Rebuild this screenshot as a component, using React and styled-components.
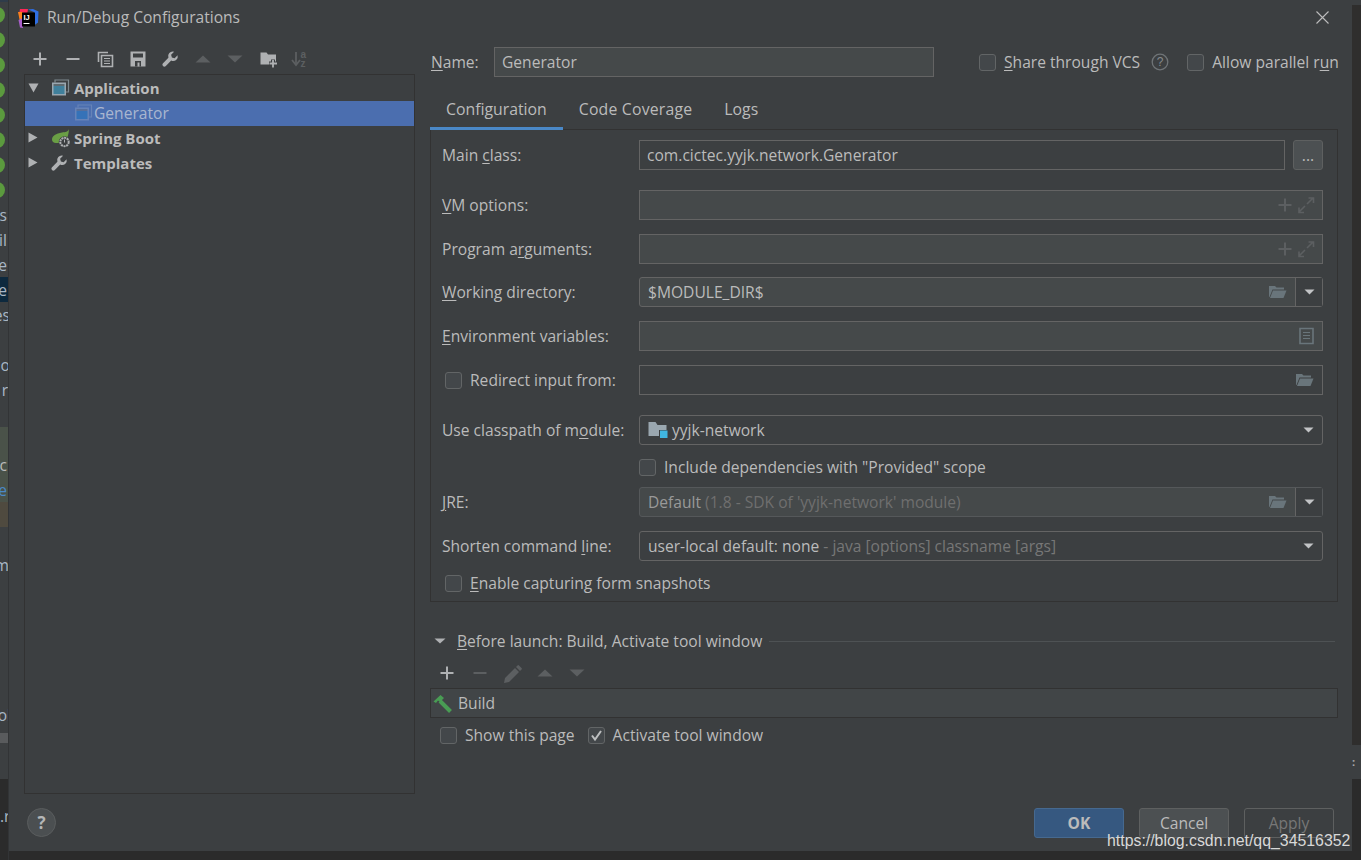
import styled, { createGlobalStyle } from "styled-components";

const GlobalStyle = createGlobalStyle`
  html, body {
    margin: 0;
    padding: 0;
    background: #2b2b2b;
    overflow: hidden;
  }
`;

const ICON = "#afb1b3";
const DIM = "#5c5f61";
const FOLDER = "#69757b";

const Root = styled.div`
  width: 1361px;
  height: 860px;
  display: flex;
  position: relative;
  overflow: hidden;
  background: #2b2b2b;
  font-family: "Open Sans", "Noto Sans", sans-serif;
  font-size: 15.6px;
  color: #bbbbbb;
`;

/* ---- the IDE showing behind the dialog ---- */
const LeftStrip = styled.div`
  width: 9px;
  flex: none;
  box-sizing: border-box;
  border-right: 1px solid #323436;
  display: flex;
  flex-direction: column;
  background: #3c3f41;
  overflow: hidden;
`;
const TopEdge = styled.div`
  height: 2px;
  flex: none;
  background: #2f3c4a;
`;
const TreeRow = styled.div`
  height: 25px;
  flex: none;
  display: flex;
  align-items: center;
  justify-content: flex-end;
  background: ${(p) => p.$bg || "transparent"};
  color: ${(p) => p.$color || "#a9b7c6"};
  white-space: nowrap;
  padding-right: ${(p) => p.$pad ?? 1}px;
  margin-right: ${(p) => p.$over || 0}px;
`;
const GreenDot = styled.div`
  width: 16px;
  height: 16px;
  flex: none;
  margin-right: 3px;
  border-radius: 50%;
  background: #5b9a3e;
`;
const ScrollPiece = styled.div`
  height: 10px;
  flex: none;
  margin-top: 6px;
  background: #595b5d;
`;
const StripGap = styled.div`
  height: 36px;
  flex: none;
`;
const StripDark = styled.div`
  flex: 1;
  background: #2b2b2b;
  padding-top: 26px;
  color: #a9b7c6;
  text-align: right;
  line-height: 22px;
  white-space: nowrap;
`;
const RightStrip = styled.div`
  width: 9px;
  flex: none;
  display: flex;
  flex-direction: column;
`;
const RightCap = styled.div`
  height: 5px;
  background: #3c3f41;
`;
const RightTop = styled.div`
  height: 740px;
  background: #2f2e2d;
`;
const RightMid = styled.div`
  height: 34px;
  background: #3c3f41;
  color: #a9a9a9;
  font-size: 11px;
  font-weight: 700;
  line-height: 34px;
`;
const RightBottom = styled.div`
  flex: 1;
  background: #2b2b2b;
`;

/* ---- dialog ---- */
const DialogColumn = styled.div`
  flex: 1;
  display: flex;
  flex-direction: column;
  min-width: 0;
`;
const Dialog = styled.div`
  height: 851px;
  flex: none;
  display: flex;
  flex-direction: column;
  background: #3c3f41;
`;
const TitleBar = styled.div`
  height: 35px;
  flex: none;
  display: flex;
  align-items: center;
  padding: 0 23px 0 10px;
  gap: 10px;
`;
const Title = styled.div`
  flex: 1;
  padding-bottom: 2px;
`;
const Body = styled.div`
  height: 759px;
  flex: none;
  display: flex;
  gap: 15px;
  padding-left: 15px;
`;
const LeftPane = styled.div`
  width: 391px;
  flex: none;
  display: flex;
  flex-direction: column;
  padding-top: 9px;
  box-sizing: border-box;
`;
const IconBar = styled.div`
  height: 30px;
  flex: none;
  display: flex;
  align-items: center;
  gap: 16.5px;
  padding-left: ${(p) => p.$left}px;
  margin-top: ${(p) => p.$top || 0}px;
`;
const Tree = styled.div`
  flex: 1;
  border: 1px solid #323232;
  padding-top: 1px;
`;
const Node = styled.div`
  height: 25px;
  box-sizing: border-box;
  display: flex;
  align-items: center;
  padding-left: ${(p) => (p.$child ? 49 : 3)}px;
  padding-bottom: 2px;
  background: ${(p) => (p.$selected ? "#4b6eaf" : "transparent")};
  color: ${(p) => (p.$selected ? "#a9b6cf" : "#bbbbbb")};
  font-weight: ${(p) => (p.$child ? 400 : 700)};
  font-size: ${(p) => (p.$child ? 15.6 : 15)}px;
`;
const CaretSlot = styled.div`
  width: 23px;
  flex: none;
  display: flex;
`;
const NodeIcon = styled.div`
  width: ${(p) => (p.$child ? 20 : 23)}px;
  flex: none;
  display: flex;
`;

const RightPane = styled.div`
  width: 908px;
  flex: none;
  display: flex;
  flex-direction: column;
`;
const NameRow = styled.div`
  height: 30px;
  flex: none;
  margin-top: 12px;
  display: flex;
  align-items: center;
  padding-left: 1px;
`;
const NameLabel = styled.div`
  width: 63px;
  flex: none;
`;
const Mn = styled.span`
  text-decoration: underline;
  text-underline-offset: 2px;
`;
const Field = styled.div`
  height: 30px;
  box-sizing: border-box;
  flex: ${(p) => (p.$width ? "none" : 1)};
  width: ${(p) => (p.$width ? `${p.$width}px` : "auto")};
  min-width: 0;
  display: flex;
  align-items: center;
  padding: 0 8px 0 ${(p) => (p.$round ? 8 : 7)}px;
  gap: 5px;
  border: 1px solid ${(p) => (p.$disabled ? "#55585a" : "#646464")};
  border-radius: ${(p) => (p.$round ? 3 : 0)}px;
  background: ${(p) => (p.$fill ? "#45494a" : "transparent")};
  white-space: nowrap;
`;
const FieldText = styled.div`
  flex: 1;
  min-width: 0;
  display: flex;
  align-items: center;
  gap: 4px;
  color: ${(p) => (p.$muted ? "#999999" : "inherit")};
`;
const Grey = styled.span`
  color: ${(p) => (p.$darker ? "#6f6f6f" : "#777777")};
`;
const ComboEnd = styled.div`
  width: 27px;
  height: 100%;
  flex: none;
  margin-right: -8px;
  margin-left: 3px;
  display: flex;
  align-items: center;
  justify-content: center;
  box-sizing: border-box;
  border-left: ${(p) => (p.$split ? "1px solid #646464" : "none")};
  background: ${(p) => (p.$split ? "#3c3f41" : "transparent")};
`;
const Box = styled.div`
  width: 17px;
  height: 17px;
  flex: none;
  box-sizing: border-box;
  border: 1px solid #626566;
  border-radius: 3px;
  background: #43474a;
  display: flex;
  align-items: center;
  justify-content: center;
`;
const Check = styled.label`
  display: flex;
  align-items: center;
  gap: 8px;
  white-space: nowrap;
  flex: none;
  margin-left: ${(p) => p.$left || 0}px;
`;
const HelpRing = styled.div`
  flex: none;
  display: flex;
  margin-left: ${(p) => p.$left}px;
`;
const TabBar = styled.div`
  height: 53px;
  flex: none;
  box-sizing: border-box;
  display: flex;
  align-items: flex-end;
  border-bottom: 1px solid #323232;
`;
const Tab = styled.div`
  height: 38px;
  box-sizing: border-box;
  display: flex;
  align-items: center;
  padding: 0 16px 2px;
  font-size: 15.8px;
  letter-spacing: ${(p) => p.$track || 0}px;
  border-bottom: 3px solid ${(p) => (p.$active ? "#4a88c7" : "transparent")};
  margin-bottom: -1px;
`;
const Panel = styled.div`
  height: 472px;
  flex: none;
  box-sizing: border-box;
  border: 1px solid #323232;
  border-top: none;
  padding: 10px 14px 0 11px;
`;
const Row = styled.div`
  height: ${(p) => p.$height || 30}px;
  margin-top: ${(p) => p.$top || 0}px;
  display: flex;
  align-items: center;
  gap: ${(p) => p.$gap || 0}px;
  padding-left: ${(p) => p.$indent || 0}px;
`;
const Label = styled.div`
  width: 197px;
  flex: none;
  white-space: nowrap;
`;
const CheckLabel = styled(Check)`
  width: 197px;
  padding-left: 3px;
  box-sizing: border-box;
`;
const DotsButton = styled.div`
  width: 30px;
  height: 30px;
  flex: none;
  margin-left: 8px;
  box-sizing: border-box;
  border: 1px solid #5e6060;
  border-radius: 3px;
  background: #4c5052;
  text-align: center;
  line-height: 28px;
`;
const SectionHead = styled.div`
  height: 20px;
  flex: none;
  margin-top: 29px;
  display: flex;
  align-items: center;
  padding: 0 3px 0 4px;
`;
const SectionText = styled.div`
  margin-left: 11px;
  white-space: nowrap;
  padding-bottom: 1px;
`;
const SectionLine = styled.div`
  flex: 1;
  height: 1px;
  margin-left: 7px;
  background: #4e5254;
`;
const BuildList = styled.div`
  height: 30px;
  flex: none;
  box-sizing: border-box;
  display: flex;
  align-items: center;
  gap: 6px;
  padding-left: 2px;
  border: 1px solid #323232;
  background: #414547;
`;
const Footer = styled.div`
  flex: 1;
  display: flex;
  align-items: flex-start;
  padding: 14px 18px 0 18px;
  gap: 15px;
`;
const HelpButton = styled.div`
  width: 29px;
  height: 29px;
  box-sizing: border-box;
  margin-right: auto;
  border: 1px solid #5a5d5e;
  border-radius: 50%;
  background: #4b4f51;
  color: #b4b6b7;
  font-weight: 700;
  font-size: 17px;
  line-height: 27px;
  text-align: center;
`;
const Btn = styled.div`
  width: 90px;
  height: 30px;
  box-sizing: border-box;
  border: 1px solid ${(p) => (p.$primary ? "#46698f" : "#5e6060")};
  border-radius: 3px;
  background: ${(p) => (p.$primary ? "#365880" : p.$off ? "transparent" : "#4c5052")};
  color: ${(p) => (p.$off ? "#777777" : "#bbbbbb")};
  font-weight: ${(p) => (p.$primary ? 700 : 400)};
  line-height: 28px;
  text-align: center;
`;
const BottomStrip = styled.div`
  flex: 1;
  background: #2b2b2b;
`;
const Watermark = styled.div`
  position: absolute;
  left: 1107px;
  top: 832px;
  font-family: "Liberation Sans", Arial, sans-serif;
  font-size: 15.87px;
  line-height: 18px;
  color: #d8d8d8;
  white-space: nowrap;
`;

/* ---- icons ---- */
const Svg = ({ size = 16, w, h, children }) => (
  <svg
    width={w || size}
    height={h || size}
    viewBox={`0 0 ${w || size} ${h || size}`}
    overflow="visible"
    style={{ display: "block", flex: "none" }}
  >
    {children}
  </svg>
);

const Plus = ({ color = ICON }) => (
  <Svg><path d="M8 1.5v13M1.5 8h13" stroke={color} strokeWidth="2" /></Svg>
);
const Minus = ({ color = ICON }) => (
  <Svg><path d="M1.5 8h13" stroke={color} strokeWidth="2" /></Svg>
);
const Copy = () => (
  <Svg>
    <path d="M1.500 11V1.500H11" fill="none" stroke={ICON} strokeWidth="1.600" />
    <path d="M4.500 4.500h11v11h-11z" fill="#3c3f41" stroke={ICON} strokeWidth="1.600" />
    <path d="M7 7.500h6M7 10h6M7 12.500h6" stroke={ICON} strokeWidth="1.200" />
  </Svg>
);
const Save = () => (
  <Svg>
    <path d="M0.500 0.500h15v15h-15z" fill={ICON} />
    <path d="M3 2.500h10v4H3z" fill="#3c3f41" />
    <path d="M5 10h6v5.500H5z" fill="#3c3f41" />
    <path d="M7.500 11.500h2v4h-2z" fill={ICON} />
  </Svg>
);
const Wrench = ({ color = ICON }) => (
  <Svg>
    <path d="M15.600 4.200l-3 3-2.700-.8-.8-2.700 3-3A4.600 4.600 0 0 0 6.400 6.800L.8 12.400a2 2 0 0 0 2.800 2.800L9.200 9.600a4.600 4.600 0 0 0 6.400-5.400z" fill={color} />
  </Svg>
);
const Pencil = () => (
  <Svg>
    <path d="M0 18l1-5L11 3l4 4L5 17zM12 2l1.500-1.500a1 1 0 0 1 1.500 0l2.500 2.500a1 1 0 0 1 0 1.500L16 6z" fill={DIM} />
  </Svg>
);
const Tri = ({ up, color = DIM, w = 16, h = 8 }) => (
  <Svg w={w} h={h}>
    <path d={up ? `M0.500 ${h - 0.5}L${w / 2} 0.500 ${w - 0.5} ${h - 0.5}z` : `M0.500 0.500H${w - 0.5}L${w / 2} ${h - 0.5}z`} fill={color} />
  </Svg>
);
const Caret = () => (
  <Svg w={10} h={11}>
    <path d="M0.500 0.500L9.500 5.500 0.500 10.500z" fill={ICON} />
  </Svg>
);
const FolderPlus = () => (
  <Svg>
    <path d="M0.500 1.500h6l1.500 2h8v10h-15.500z" fill={ICON} />
    <path d="M13 8.500v8M9 12.500h8" stroke="#3c3f41" strokeWidth="4" />
    <path d="M13 9v7.500M9.500 12.500h7.500" stroke={ICON} strokeWidth="1.800" />
  </Svg>
);
const Sort = () => (
  <Svg>
    <path d="M4 1v12" stroke={DIM} strokeWidth="1.800" />
    <path d="M0 9l4 5 4-5" fill="none" stroke={DIM} strokeWidth="1.800" />
    <text x="8.500" y="6.500" fontSize="10" fontWeight="700" fill={DIM} fontFamily="Liberation Sans">a</text>
    <text x="8.500" y="15.500" fontSize="10" fontWeight="700" fill={DIM} fontFamily="Liberation Sans">z</text>
  </Svg>
);
const Close = () => (
  <Svg w={13} h={13}>
    <path d="M0.500 0.500l12 12M12.500 0.500l-12 12" stroke="#bdbdbd" strokeWidth="1.100" />
  </Svg>
);
const Logo = () => (
  <Svg w={18} h={20}>
    <path d="M1 1h8l-1 6H0z" fill="#fe2857" />
    <path d="M-1 4h5v9l-3 1z" fill="#fc801d" />
    <path d="M-.5 12L4 10v10l-3-.5z" fill="#a85fc8" />
    <path d="M9 1.500l5-.5 5.500 2.500-.5 11-4 3V4z" fill="#2f6fe4" />
    <path d="M3 4.500h13v14H3z" fill="#000000" />
    <text x="4.500" y="11.500" fontSize="7.500" fontWeight="700" fill="#ffffff" fontFamily="Liberation Sans">IJ</text>
    <path d="M4.500 15h6v1h-6z" fill="#ffffff" />
  </Svg>
);
const AppIcon = ({ dim }) => (
  <Svg w={18} h={18}>
    <path d="M4 3.500V1h13.500v12H15" fill="none" stroke={dim ? "#6683b8" : "#7f8a90"} strokeWidth="1.200" />
    <path d="M1 3.500h14v13H1z" fill={dim ? "#6683b8" : "#9aa7b0"} />
    <path d="M2.500 7h11v8h-11z" fill={dim ? "#3572b8" : "#40809c"} />
    <path d="M2.500 5h11v2h-11z" fill={dim ? "#566f9c" : "#5e6a70"} />
  </Svg>
);
const SpringIcon = () => (
  <Svg w={20} h={20}>
    <path d="M18 1c-1 3-3.500 3-7 3.500C5 5.500 1 8 1 11.500c0 2 1.500 3.500 4 3.500h5c4 0 7.500-5 8-14z" fill="#6a9f45" />
    <circle cx="13.500" cy="14" r="5.800" fill="#3c3f41" />
    <circle cx="13.500" cy="14" r="4.200" fill="none" stroke={ICON} strokeWidth="2" strokeDasharray="2 0.700" />
    <path d="M13.500 11.500v3" stroke={ICON} strokeWidth="1" />
  </Svg>
);
const Hammer = () => (
  <Svg w={19} h={19}>
    <path d="M7 7l10.500 10.500" stroke="#499c54" strokeWidth="4" />
    <path d="M0.500 7.500L7.500 1l3.500 3-4 4-2-1.500-2 2.500z" fill="#499c54" />
  </Svg>
);
const FolderOpen = ({ color = FOLDER }) => (
  <Svg w={19} h={16}>
    <path d="M1 2h6l1.500 1.500H16v2H4.500L1.500 13H1z" fill={color} />
    <path d="M5 6.500h13.500l-3 7.500H2z" fill={color} />
  </Svg>
);
const Expand = () => (
  <Svg>
    <path d="M9 7l5.500-5.500M10.500 1h5v5M7 9l-5.500 5.500M1 10.500v5h5" fill="none" stroke={DIM} strokeWidth="1.600" />
  </Svg>
);
const DocIcon = () => (
  <Svg w={15} h={18}>
    <path d="M1 1.500h13v15H1z" fill="none" stroke={FOLDER} strokeWidth="1.600" />
    <path d="M4 5.500h7M4 8.500h7M4 11.500h7" stroke={FOLDER} strokeWidth="1.200" />
  </Svg>
);
const ModuleFolder = () => (
  <Svg w={20} h={18}>
    <path d="M0.500 1h7l2 3h9v11h-18z" fill="#9aa7b0" />
    <path d="M11 9h8v8.500h-8z" fill="#3c3f41" />
    <path d="M12 9.500h7.500v7.500H12z" fill="#40b6e0" />
  </Svg>
);
const Help = () => (
  <Svg w={18} h={18}>
    <circle cx="9" cy="9" r="7.800" fill="none" stroke="#6f7477" strokeWidth="1.300" />
    <text x="9" y="13.300" textAnchor="middle" fontSize="12" fill="#858a8d" fontFamily="Liberation Sans">?</text>
  </Svg>
);
const Tick = () => (
  <Svg w={13} h={13}>
    <path d="M2 6.500L5 10.500 11 2" fill="none" stroke="#bdbfc0" strokeWidth="2" />
  </Svg>
);
const Drop = () => <Tri w={11} h={6} color="#c2c4c6" />;

const ARGS = (
  <>
    <Plus color={DIM} />
    <Expand />
  </>
);

export default function App() {
  const greenRows = [0, 1, 2, 3, 4, 5, 6, 7];
  return (
    <Root>
      <GlobalStyle />
      <LeftStrip>
        <TopEdge />
        {greenRows.map((n) => (
          <TreeRow key={n} $pad={0}><GreenDot /></TreeRow>
        ))}
        <TreeRow>s</TreeRow>
        <TreeRow>til</TreeRow>
        <TreeRow>e</TreeRow>
        <TreeRow $bg="#0d293e">e</TreeRow>
        <TreeRow $over={-3}>es</TreeRow>
        <TreeRow />
        <TreeRow $over={-3}>o</TreeRow>
        <TreeRow $pad={0}>r</TreeRow>
        <TreeRow />
        <TreeRow $bg="#4a5249" />
        <TreeRow $bg="#4a5249" $color="#bbbbbb">c</TreeRow>
        <TreeRow $bg="#4a5249" $color="#4a88c7">e</TreeRow>
        <TreeRow $bg="#4f4a3f" />
        <TreeRow />
        <TreeRow $over={-2}>m</TreeRow>
        <TreeRow />
        <TreeRow />
        <TreeRow />
        <TreeRow />
        <TreeRow />
        <TreeRow $over={-4}>ol</TreeRow>
        <ScrollPiece />
        <StripGap />
        <StripDark>.r</StripDark>
      </LeftStrip>

      <DialogColumn>
        <Dialog>
          <TitleBar>
            <Logo />
            <Title>Run/Debug Configurations</Title>
            <Close />
          </TitleBar>
          <Body>
            <LeftPane>
              <IconBar $left={8}>
                <Plus />
                <Minus />
                <Copy />
                <Save />
                <Wrench />
                <Tri up />
                <Tri />
                <FolderPlus />
                <Sort />
              </IconBar>
              <Tree>
                <Node>
                  <CaretSlot><Tri w={11} h={10} color={ICON} /></CaretSlot>
                  <NodeIcon><AppIcon /></NodeIcon>
                  Application
                </Node>
                <Node $child $selected>
                  <NodeIcon $child><AppIcon dim /></NodeIcon>
                  Generator
                </Node>
                <Node>
                  <CaretSlot><Caret /></CaretSlot>
                  <NodeIcon><SpringIcon /></NodeIcon>
                  Spring Boot
                </Node>
                <Node>
                  <CaretSlot><Caret /></CaretSlot>
                  <NodeIcon><Wrench /></NodeIcon>
                  Templates
                </Node>
              </Tree>
            </LeftPane>

            <RightPane>
              <NameRow>
                <NameLabel><Mn>N</Mn>ame:</NameLabel>
                <Field $width={440} $fill>Generator</Field>
                <Check $left={45}><Box /><span><Mn>S</Mn>hare through VCS</span></Check>
                <HelpRing $left={11}><Help /></HelpRing>
                <Check $left={18}><Box /><span>Allow parallel r<Mn>u</Mn>n</span></Check>
              </NameRow>
              <TabBar>
                <Tab $active>Configuration</Tab>
                <Tab $track={0.2}>Code Coverage</Tab>
                <Tab>Logs</Tab>
              </TabBar>
              <Panel>
                <Row>
                  <Label>Main <Mn>c</Mn>lass:</Label>
                  <Field>com.cictec.yyjk.network.Generator</Field>
                  <DotsButton>...</DotsButton>
                </Row>
                <Row $top={20}>
                  <Label><Mn>V</Mn>M options:</Label>
                  <Field $fill><FieldText />{ARGS}</Field>
                </Row>
                <Row $top={14}>
                  <Label>Program a<Mn>r</Mn>guments:</Label>
                  <Field $fill><FieldText />{ARGS}</Field>
                </Row>
                <Row $top={13}>
                  <Label><Mn>W</Mn>orking directory:</Label>
                  <Field $fill $round>
                    <FieldText>$MODULE_DIR$</FieldText>
                    <FolderOpen />
                    <ComboEnd $split><Drop /></ComboEnd>
                  </Field>
                </Row>
                <Row $top={14}>
                  <Label><Mn>E</Mn>nvironment variables:</Label>
                  <Field $fill><FieldText /><DocIcon /></Field>
                </Row>
                <Row $top={14}>
                  <CheckLabel><Box /><span>Redirect input from:</span></CheckLabel>
                  <Field><FieldText /><FolderOpen /></Field>
                </Row>
                <Row $top={20}>
                  <Label>Use classpath of m<Mn>o</Mn>dule:</Label>
                  <Field $round>
                    <FieldText><ModuleFolder />yyjk-network</FieldText>
                    <ComboEnd><Drop /></ComboEnd>
                  </Field>
                </Row>
                <Row $top={12} $height={20} $indent={197}>
                  <Check><Box /><span>Include dependencies with "Provided" scope</span></Check>
                </Row>
                <Row $top={10}>
                  <Label><Mn>J</Mn>RE:</Label>
                  <Field $fill $round $disabled>
                    <FieldText $muted><span>Default <Grey $darker>(1.8 - SDK of 'yyjk-network' module)</Grey></span></FieldText>
                    <FolderOpen />
                    <ComboEnd $split><Drop /></ComboEnd>
                  </Field>
                </Row>
                <Row $top={14}>
                  <Label>Shorten command <Mn>l</Mn>ine:</Label>
                  <Field $round>
                    <FieldText><span>user-local default: none <Grey>- java [options] classname [args]</Grey></span></FieldText>
                    <ComboEnd><Drop /></ComboEnd>
                  </Field>
                </Row>
                <Row $top={12} $height={20} $indent={3}>
                  <Check><Box /><span><Mn>E</Mn>nable capturing form snapshots</span></Check>
                </Row>
              </Panel>
              <SectionHead>
                <Tri w={12} h={6} color={ICON} />
                <SectionText><Mn>B</Mn>efore launch: Build, Activate tool window</SectionText>
                <SectionLine />
              </SectionHead>
              <IconBar $left={9} $top={7}>
                <Plus />
                <Minus color={DIM} />
                <Pencil />
                <Tri up />
                <Tri />
              </IconBar>
              <BuildList><Hammer />Build</BuildList>
              <Row $top={7} $height={20} $indent={10} $gap={13}>
                <Check><Box /><span>Show this page</span></Check>
                <Check><Box><Tick /></Box><span>Activate tool window</span></Check>
              </Row>
            </RightPane>
          </Body>
          <Footer>
            <HelpButton>?</HelpButton>
            <Btn $primary>OK</Btn>
            <Btn>Cancel</Btn>
            <Btn $off>Apply</Btn>
          </Footer>
        </Dialog>
        <BottomStrip />
      </DialogColumn>

      <RightStrip>
        <RightCap />
        <RightTop />
        <RightMid>:</RightMid>
        <RightBottom />
      </RightStrip>
      <Watermark>https://blog.csdn.net/qq_34516352</Watermark>
    </Root>
  );
}
